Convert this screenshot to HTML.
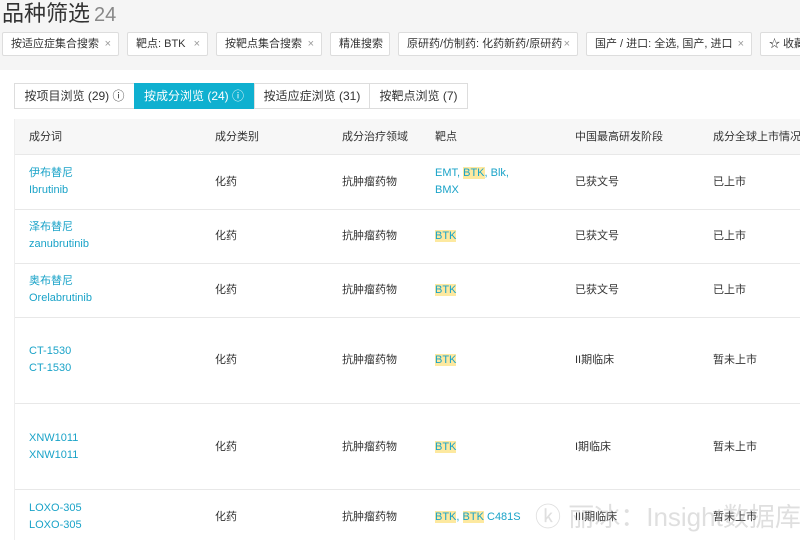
<!DOCTYPE html>
<html><head><meta charset="utf-8"><style>
*{margin:0;padding:0;box-sizing:border-box}
body{width:800px;height:540px;overflow:hidden;background:#f5f5f5;font-family:"Liberation Sans","Noto Sans CJK SC",sans-serif;color:#333;position:relative}
.title{position:absolute;left:2px;top:0;font-size:22px;color:#333;line-height:28px}
.title span{color:#888;font-size:20px;margin-left:4px}
.tag{position:absolute;top:32px;height:24px;background:#fff;border:1px solid #ddd;border-radius:2px;font-size:11px;line-height:22px;padding-left:8px;color:#333;white-space:nowrap}
.tag i{font-style:normal;color:#999;position:absolute;right:7px;top:0}
.panel{position:absolute;left:0;top:70px;width:800px;height:470px;background:#fff}
.tabs div{position:absolute;top:83px;height:26px;border:1px solid #ddd;font-size:12px;line-height:24px;text-align:center;background:#fff;color:#333;white-space:nowrap}
.tabs div.on{background:#0fb0d0;border-color:#0fb0d0;color:#fff}
.table{position:absolute;left:14px;top:119px;width:786px;height:421px;border-left:1px solid #eee}
.hd{position:absolute;left:0;top:0;width:786px;height:36px;background:#f7f7f7;border-bottom:1px solid #e8e8e8}
.row{position:absolute;left:0;width:786px;border-bottom:1px solid #e8e8e8}
.c{position:absolute;font-size:11px;color:#333;line-height:17px;white-space:nowrap}
.a{color:#1aa3c8}
.h{background:#fde9a0}
.wm{position:absolute;left:535px;top:497px;font-size:26px;color:rgba(150,150,150,.3);white-space:nowrap}
</style></head><body>
<div class="title">品种筛选<span>24</span></div>
<div class="tag" style="left:2px;width:117px">按适应症集合搜索<i>×</i></div>
<div class="tag" style="left:127px;width:81px">靶点: BTK<i>×</i></div>
<div class="tag" style="left:216px;width:106px">按靶点集合搜索<i>×</i></div>
<div class="tag" style="left:330px;width:60px">精准搜索</div>
<div class="tag" style="left:398px;width:180px">原研药/仿制药: 化药新药/原研药<i>×</i></div>
<div class="tag" style="left:586px;width:166px">国产 / 进口: 全选, 国产, 进口<i>×</i></div>
<div class="tag" style="left:760px;width:50px">☆ 收藏</div>
<div class="panel"></div>
<div class="tabs"><div style="left:14px;width:121px">按项目浏览 (29) ⓘ</div><div class="on" style="left:134px;width:120px">按成分浏览 (24) ⓘ</div><div style="left:254px;width:116px">按适应症浏览 (31)</div><div style="left:369px;width:99px">按靶点浏览 (7)</div></div>
<div class="table">
<div class="hd"></div>
<div class="c" style="left:14px;top:10px">成分词</div><div class="c" style="left:200px;top:10px">成分类别</div><div class="c" style="left:327px;top:10px">成分治疗领域</div><div class="c" style="left:420px;top:10px">靶点</div><div class="c" style="left:560px;top:10px">中国最高研发阶段</div><div class="c" style="left:698px;top:10px">成分全球上市情况</div>
<div class="row" style="top:36px;height:55px"></div>
<div class="c a" style="left:14px;top:46px">伊布替尼<br>Ibrutinib</div><div class="c" style="left:200px;top:55px">化药</div><div class="c" style="left:327px;top:55px">抗肿瘤药物</div><div class="c a" style="left:420px;top:46px">EMT, <span class="h">BTK</span>, Blk,<br>BMX</div><div class="c" style="left:560px;top:55px">已获文号</div><div class="c" style="left:698px;top:55px">已上市</div>
<div class="row" style="top:91px;height:54px"></div>
<div class="c a" style="left:14px;top:100px">泽布替尼<br>zanubrutinib</div><div class="c" style="left:200px;top:109px">化药</div><div class="c" style="left:327px;top:109px">抗肿瘤药物</div><div class="c a" style="left:420px;top:109px"><span class="h">BTK</span></div><div class="c" style="left:560px;top:109px">已获文号</div><div class="c" style="left:698px;top:109px">已上市</div>
<div class="row" style="top:145px;height:54px"></div>
<div class="c a" style="left:14px;top:154px">奥布替尼<br>Orelabrutinib</div><div class="c" style="left:200px;top:163px">化药</div><div class="c" style="left:327px;top:163px">抗肿瘤药物</div><div class="c a" style="left:420px;top:163px"><span class="h">BTK</span></div><div class="c" style="left:560px;top:163px">已获文号</div><div class="c" style="left:698px;top:163px">已上市</div>
<div class="row" style="top:199px;height:86px"></div>
<div class="c a" style="left:14px;top:224px">CT-1530<br>CT-1530</div><div class="c" style="left:200px;top:233px">化药</div><div class="c" style="left:327px;top:233px">抗肿瘤药物</div><div class="c a" style="left:420px;top:233px"><span class="h">BTK</span></div><div class="c" style="left:560px;top:233px">II期临床</div><div class="c" style="left:698px;top:233px">暂未上市</div>
<div class="row" style="top:285px;height:86px"></div>
<div class="c a" style="left:14px;top:311px">XNW1011<br>XNW1011</div><div class="c" style="left:200px;top:320px">化药</div><div class="c" style="left:327px;top:320px">抗肿瘤药物</div><div class="c a" style="left:420px;top:320px"><span class="h">BTK</span></div><div class="c" style="left:560px;top:320px">I期临床</div><div class="c" style="left:698px;top:320px">暂未上市</div>
<div class="c a" style="left:14px;top:381px">LOXO-305<br>LOXO-305</div><div class="c" style="left:200px;top:390px">化药</div><div class="c" style="left:327px;top:390px">抗肿瘤药物</div><div class="c a" style="left:420px;top:390px"><span class="h">BTK</span>, <span class="h">BTK</span> C481S</div><div class="c" style="left:560px;top:390px">III期临床</div><div class="c" style="left:698px;top:390px">暂未上市</div>
</div>
<div class="wm">ⓚ 丽冰：Insight数据库</div>
</body></html>
